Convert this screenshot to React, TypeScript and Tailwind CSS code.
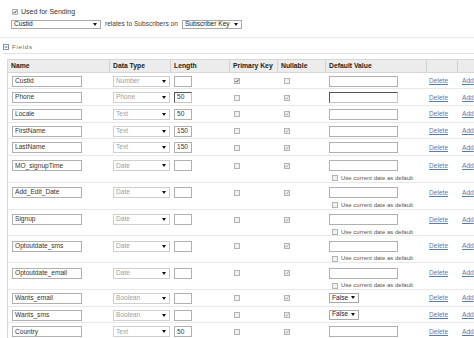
import React from 'react'

type Row = {
  name: string
  type: string
  len: string
  pk?: boolean
  nul: boolean
  kind: 'text' | 'date' | 'bool'
  focus?: boolean
}

const rows: Row[] = [
  { name: 'Custid', type: 'Number', len: '', pk: true, nul: false, kind: 'text' },
  { name: 'Phone', type: 'Phone', len: '50', nul: true, kind: 'text', focus: true },
  { name: 'Locale', type: 'Text', len: '50', nul: true, kind: 'text' },
  { name: 'FirstName', type: 'Text', len: '150', nul: true, kind: 'text' },
  { name: 'LastName', type: 'Text', len: '150', nul: true, kind: 'text' },
  { name: 'MO_signupTime', type: 'Date', len: '', nul: true, kind: 'date' },
  { name: 'Add_Edit_Date', type: 'Date', len: '', nul: true, kind: 'date' },
  { name: 'Signup', type: 'Date', len: '', nul: true, kind: 'date' },
  { name: 'Optoutdate_sms', type: 'Date', len: '', nul: true, kind: 'date' },
  { name: 'Optoutdate_email', type: 'Date', len: '', nul: true, kind: 'date' },
  { name: 'Wants_email', type: 'Boolean', len: '', nul: true, kind: 'bool' },
  { name: 'Wants_sms', type: 'Boolean', len: '', nul: true, kind: 'bool' },
  { name: 'Country', type: 'Text', len: '50', nul: true, kind: 'text' },
]

const cols = 'grid grid-cols-[102px_61px_59px_48px_48px_101px_31px_40px]'

function Box({ checked, dim }: { checked?: boolean; dim?: boolean }) {
  return (
    <span className="flex w-[6px] h-[6px] shrink-0 items-center justify-center border border-[#b4b4b4] bg-[#f1f1f1]">
      {checked && (
        <svg viewBox="0 0 6 6" className="w-[6px] h-[6px]">
          <path d="M0.8 3.1 L2.4 4.7 L5.3 0.9" stroke={dim ? '#9a9a9a' : '#222'} strokeWidth="1.2" fill="none" />
        </svg>
      )}
    </span>
  )
}

function Arrow() {
  return (
    <svg viewBox="0 0 4 3" className="w-[4px] h-[3px] shrink-0">
      <path d="M0 0 H4 L2 3 Z" fill="#111" />
    </svg>
  )
}

function Sel({ text, className, dim }: { text: string; className: string; dim?: boolean }) {
  return (
    <div
      className={`flex items-center justify-between border pl-[2px] pr-[3px] bg-white ${
        dim ? 'border-[#cfcfcf] text-[#a0a0a0]' : 'border-[#a8a8a8] text-[#222]'
      } ${className}`}
    >
      <span className="leading-none">{text}</span>
      <Arrow />
    </div>
  )
}

function Input({ value, className, focus }: { value?: string; className: string; focus?: boolean }) {
  return (
    <div
      className={`flex items-center bg-white border pl-[2px] leading-none text-[#333] ${
        focus ? 'border-[#c4c4c4] border-t-[#555] border-l-[#555]' : 'border-[#b0b0b0]'
      } ${className}`}
    >
      {value}
    </div>
  )
}

export default function App() {
  return (
    <div
      className="w-[474px] h-[338px] overflow-hidden bg-white text-[6.6px] text-[#222]"
      style={{ fontFamily: '"Liberation Sans", Arial, sans-serif' }}
    >
      <div className="pt-[8px]">
        <div className="flex items-center h-[8px] pl-[12px] gap-[3px]">
          <Box checked />
          <span className="text-[7px] text-[#333]">Used for Sending</span>
        </div>
        <div className="flex items-center mt-[3.5px] pl-[11px] h-[9px]">
          <Sel text="Custid" className="w-[90px] h-[9px]" />
          <span className="ml-[4px] mr-[4px] text-[#444]">relates to Subscribers on</span>
          <Sel text="Subscriber Key" className="w-[60px] h-[9px]" />
        </div>
      </div>

      <div className="mt-[8.5px] border-t border-[#e8e8e8]" />

      <div className="ml-[3px] h-[16px] flex items-end pb-[3px] gap-[3px] border-b border-[#e2e2e2]">
        <svg viewBox="0 0 6 6" className="w-[6px] h-[6px] mb-[0.5px]">
          <rect x="0.5" y="0.5" width="5" height="5" fill="#fff" stroke="#7f93ad" />
          <path d="M1.5 3 H4.5" stroke="#4e6a8c" />
        </svg>
        <span className="text-[6px] tracking-[0.8px] text-[#666] leading-none">Fields</span>
      </div>

      <div className="mt-[5px] ml-[7px] border-l border-[#d8d8d8]">
        <div className={`${cols} h-[13.5px] bg-[#ececec] border-y border-[#d6d6d6] font-bold text-[6.8px] text-[#222]`}>
          {['Name', 'Data Type', 'Length', 'Primary Key', 'Nullable', 'Default Value', '', ''].map((h, i) => (
            <div key={i} className="flex items-center pl-[3px] border-r border-[#d2d2d2]">
              {h}
            </div>
          ))}
        </div>

        {rows.map((r) => (
          <div
            key={r.name}
            className={`${cols} border-b border-[#e8e8e8] ${r.kind === 'date' ? 'h-[26.8px] pt-[4.5px]' : 'h-[16.7px] pt-[3px]'}`}
          >
            <div className="pl-[4px]">
              <Input value={r.name} className="w-[70px] h-[11px]" />
            </div>
            <div className="pl-[3px]">
              <Sel text={r.type} dim className="w-[57px] h-[11px]" />
            </div>
            <div className="pl-[3px]">
              <Input value={r.len} focus={r.focus} className="w-[18px] h-[11px]" />
            </div>
            <div className="pl-[4px] h-[11px] flex items-center">
              <Box checked={r.pk} />
            </div>
            <div className="pl-[6px] h-[11px] flex items-center">
              <Box checked={r.nul} dim />
            </div>
            <div className="pl-[3px]">
              {r.kind === 'bool' ? (
                <Sel text="False" className="w-[30px] h-[10px]" />
              ) : (
                <Input focus={r.focus} className="w-[69px] h-[11px]" />
              )}
              {r.kind === 'date' && (
                <div className="flex items-center gap-[3px] mt-[3px] pl-[3px] h-[8px]">
                  <Box />
                  <span className="text-[6px] text-[#555]">Use current date as default</span>
                </div>
              )}
            </div>
            <div className="pl-[2px] h-[11px] flex items-center">
              <span className="text-[#5a7cab] underline">Delete</span>
            </div>
            <div className="pl-[4px] h-[11px] flex items-center whitespace-nowrap">
              <span className="text-[#5a7cab] underline">Add</span>
            </div>
          </div>
        ))}
      </div>
    </div>
  )
}
